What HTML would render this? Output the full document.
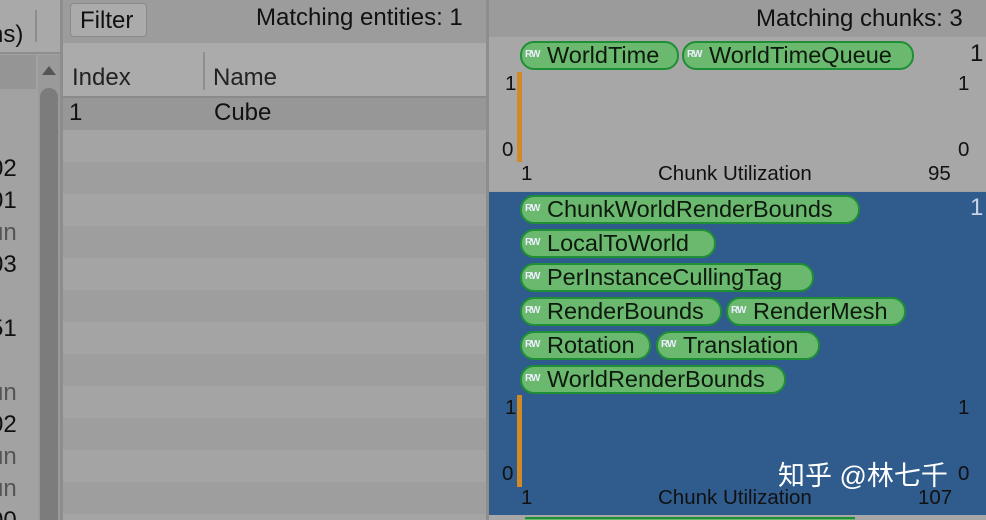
<!DOCTYPE html><html><head><meta charset="utf-8"><style>
*{margin:0;padding:0;box-sizing:border-box}
html,body{width:986px;height:520px;overflow:hidden}
body{background:#a2a2a2;font-family:"Liberation Sans","Noto Sans CJK SC",sans-serif;color:#111;position:relative}
.a{position:absolute;white-space:nowrap}
.t{font-size:24px;line-height:26px}
.s{font-size:20.5px;line-height:20px}
.pill{position:absolute;height:29px;border:2px solid #1f8f36;background:#6bb86f;border-radius:14px;font-size:23.5px;line-height:25px;padding-left:25px;color:#0d1a0d;white-space:nowrap;overflow:hidden}
.pill::before{content:"RW";position:absolute;left:3px;top:6px;font-size:10px;line-height:12px;font-weight:bold;color:#eef;letter-spacing:-1px}
</style></head><body>
<div class="a" style="left:0;top:0;width:62px;height:52px;background:#a9a9a9"></div>
<div class="a t" style="left:-10px;top:22px;color:#111">ns)</div>
<div class="a" style="left:35px;top:10px;width:2px;height:32px;background:#8c8c8c"></div>
<div class="a" style="left:0;top:52px;width:62px;height:2px;background:#8e8e8e"></div>
<div class="a" style="left:0;top:55px;width:36px;height:34px;background:#959595"></div>
<div class="a" style="left:38px;top:55px;width:22px;height:465px;background:#9a9a9a"></div>
<div class="a" style="left:40px;top:88px;width:18px;height:432px;background:#7c7c7c;border-radius:9px 9px 0 0"></div>
<div class="a" style="left:42px;top:66px;width:0;height:0;border-left:7px solid transparent;border-right:7px solid transparent;border-bottom:9px solid #555"></div>
<div class="a" style="left:60px;top:0;width:3px;height:520px;background:#8d8d8d"></div>
<div class="a t" style="left:-10px;top:156px">02</div>
<div class="a t" style="left:-10px;top:188px">01</div>
<div class="a t" style="left:-10px;top:220px;color:#555">un</div>
<div class="a t" style="left:-10px;top:252px">03</div>
<div class="a t" style="left:-10px;top:316px">51</div>
<div class="a t" style="left:-10px;top:380px;color:#555">un</div>
<div class="a t" style="left:-10px;top:412px">02</div>
<div class="a t" style="left:-10px;top:444px;color:#555">un</div>
<div class="a t" style="left:-10px;top:476px;color:#555">un</div>
<div class="a t" style="left:-10px;top:508px">00</div>
<div class="a" style="left:63px;top:0;width:423px;height:43px;background:#9c9c9c"></div>
<div class="a t" style="left:70px;top:3px;width:77px;height:34px;background:#ababab;border:1px solid #8a8a8a;border-radius:4px;padding:4px 0 0 9px">Filter</div>
<div class="a t" style="left:256px;top:5px">Matching entities: 1</div>
<div class="a" style="left:63px;top:43px;width:423px;height:53px;background:#ababab"></div>
<div class="a" style="left:203px;top:52px;width:2px;height:38px;background:#8f8f8f"></div>
<div class="a t" style="left:72px;top:65px;color:#222">Index</div>
<div class="a t" style="left:213px;top:65px;color:#222">Name</div>
<div class="a" style="left:63px;top:96px;width:423px;height:2px;background:#8a8a8a"></div>
<div class="a" style="left:63px;top:98px;width:423px;height:32px;background:#979797"></div>
<div class="a t" style="left:69px;top:100px">1</div>
<div class="a t" style="left:214px;top:100px">Cube</div>
<div class="a" style="left:63px;top:130px;width:423px;height:390px;background:repeating-linear-gradient(#a4a4a4 0 32px,#9e9e9e 32px 64px)"></div>
<div class="a" style="left:486px;top:0;width:3px;height:520px;background:#8d8d8d"></div>
<div class="a" style="left:489px;top:0;width:497px;height:37px;background:#9b9b9b"></div>
<div class="a t" style="left:756px;top:6px">Matching chunks: 3</div>
<div class="a" style="left:489px;top:37px;width:497px;height:154px;background:#a7a7a7"></div>
<div class="pill" style="left:520px;top:41px;width:159px">WorldTime</div>
<div class="pill" style="left:682px;top:41px;width:232px">WorldTimeQueue</div>
<div class="a t" style="left:970px;top:41px">1</div>
<div class="a" style="left:517px;top:72px;width:5px;height:90px;background:#d18a26"></div>
<div class="a s" style="left:505px;top:74px">1</div>
<div class="a s" style="left:958px;top:74px">1</div>
<div class="a s" style="left:502px;top:140px">0</div>
<div class="a s" style="left:958px;top:140px">0</div>
<div class="a s" style="left:521px;top:164px">1</div>
<div class="a s" style="left:658px;top:164px">Chunk Utilization</div>
<div class="a s" style="left:928px;top:164px">95</div>
<div class="a" style="left:489px;top:192px;width:497px;height:323px;background:#2f5b8d"></div>
<div class="a t" style="left:970px;top:195px;color:#c8d4e4">1</div>
<div class="pill" style="left:520px;top:195px;width:340px">ChunkWorldRenderBounds</div>
<div class="pill" style="left:520px;top:229px;width:196px">LocalToWorld</div>
<div class="pill" style="left:520px;top:263px;width:294px">PerInstanceCullingTag</div>
<div class="pill" style="left:520px;top:297px;width:202px">RenderBounds</div>
<div class="pill" style="left:726px;top:297px;width:180px">RenderMesh</div>
<div class="pill" style="left:520px;top:331px;width:131px">Rotation</div>
<div class="pill" style="left:656px;top:331px;width:164px">Translation</div>
<div class="pill" style="left:520px;top:365px;width:266px">WorldRenderBounds</div>
<div class="a" style="left:517px;top:395px;width:5px;height:92px;background:#d18a26"></div>
<div class="a s" style="left:505px;top:398px;color:#111">1</div>
<div class="a s" style="left:958px;top:398px;color:#111">1</div>
<div class="a s" style="left:502px;top:464px;color:#111">0</div>
<div class="a s" style="left:958px;top:464px;color:#111">0</div>
<div class="a s" style="left:521px;top:488px;color:#111">1</div>
<div class="a s" style="left:658px;top:488px;color:#111">Chunk Utilization</div>
<div class="a s" style="left:918px;top:488px;color:#111">107</div>
<div class="a" style="left:778px;top:460px;font-size:27px;line-height:32px;color:#fff;white-space:nowrap">知乎 @林七千</div>
<div class="a" style="left:489px;top:515px;width:497px;height:5px;background:#a7a7a7"></div>
<div class="a" style="left:525px;top:517px;width:330px;height:3px;background:#6bb86f;border-top:2px solid #1f8f36"></div>
</body></html>
